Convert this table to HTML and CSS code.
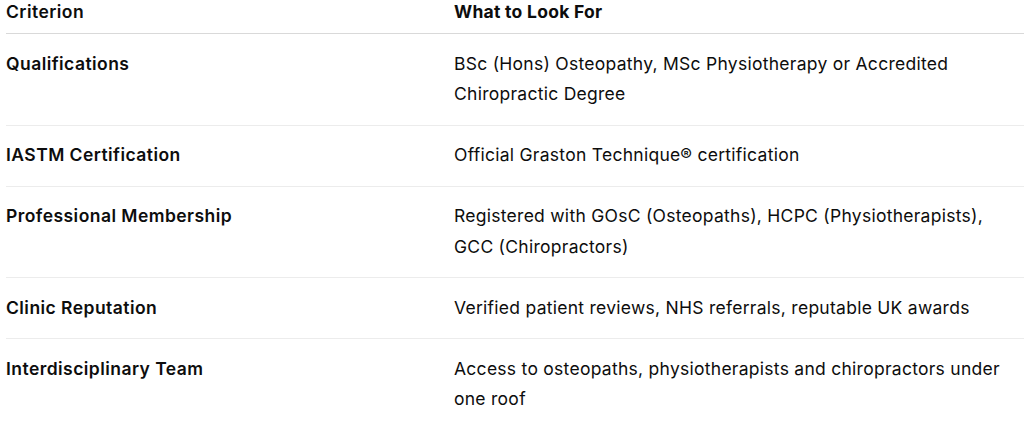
FILE: index.html
```html
<!DOCTYPE html>
<html lang="en">
<head>
	<meta charset="UTF-8">
	<title>Choosing a practitioner</title>
	<link rel="stylesheet" href="styles.css">
</head>
<body>
	<section class="wrap">
		<table class="criteria">
			<thead>
				<tr>
					<th class="col_name">Criterion</th>
					<th>What to Look For</th>
				</tr>
			</thead>
			<tbody>
				<tr>
					<td class="col_name">Qualifications</td>
					<td>BSc (Hons) Osteopathy, MSc Physiotherapy or Accredited Chiropractic Degree</td>
				</tr>
				<tr>
					<td class="col_name">IASTM Certification</td>
					<td>Official Graston Technique® certification</td>
				</tr>
				<tr>
					<td class="col_name">Professional Membership</td>
					<td>Registered with GOsC (Osteopaths), HCPC (Physiotherapists), GCC (Chiropractors)</td>
				</tr>
				<tr>
					<td class="col_name">Clinic Reputation</td>
					<td>Verified patient reviews, NHS referrals, reputable UK awards</td>
				</tr>
				<tr>
					<td class="col_name">Interdisciplinary Team</td>
					<td>Access to osteopaths, physiotherapists and chiropractors under one roof</td>
				</tr>
			</tbody>
		</table>
	</section>
</body>
</html>
```

FILE: styles.css
```css
*{margin:0;padding:0;}
body{
	background: #fff;
	font-family: Inter, "Noto Sans", sans-serif;
	font-size: 17.5px;
	letter-spacing: 0.27px;
	color: #0d0d0d;
}
.wrap{
	padding-left: 6px;
	overflow: hidden;
}
.criteria{
	width: 1018px;
	border-collapse: collapse;
	table-layout: fixed;
}
.criteria th,
.criteria td{
	text-align: left;
	vertical-align: top;
	padding: 14.75px 0;
	line-height: 30.5px;
}
.criteria .col_name{
	width: 448px;
	font-weight: 600;
	letter-spacing: 0.45px;
}
.criteria th{
	padding: 0 0 9px;
	line-height: 24px;
	border-bottom: 1px solid #d9d9d9;
}
.criteria td{
	font-weight: 400;
	border-bottom: 1px solid #ececec;
}
.criteria tbody tr:last-child td{
	border-bottom: none;
}
```
